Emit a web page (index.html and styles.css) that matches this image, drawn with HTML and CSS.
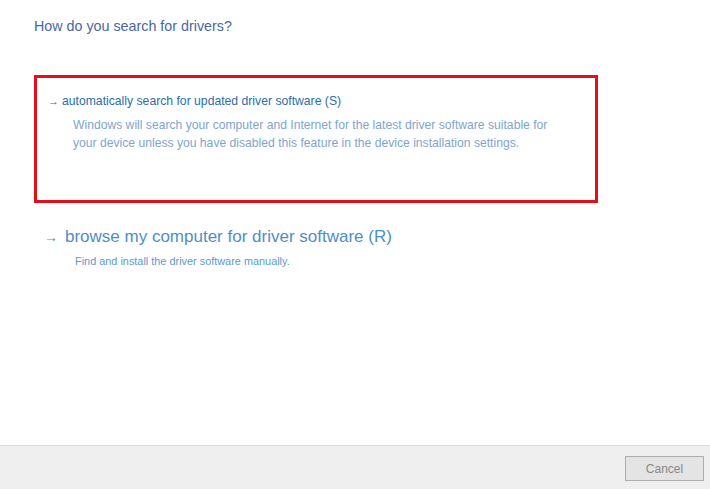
FILE: index.html
```html
<!DOCTYPE html>
<html>
<head>
<meta charset="utf-8">
<link rel="stylesheet" href="styles.css">
</head>
<body>
<div class="page">
  <main class="content">
    <h1 class="title">How do you search for drivers?</h1>
    <div class="option option-auto">
      <div class="opt-head"><span class="arrow">→</span><span class="opt-label">automatically search for updated driver software (S)</span></div>
      <p class="opt-desc">Windows will search your computer and Internet for the latest driver software suitable for your device unless you have disabled this feature in the device installation settings.</p>
    </div>
    <div class="option option-browse">
      <div class="opt-head"><span class="arrow">→</span><span class="opt-label">browse my computer for driver software (R)</span></div>
      <p class="opt-desc">Find and install the driver software manually.</p>
    </div>
  </main>
  <footer class="footer">
    <button class="btn">Cancel</button>
  </footer>
</div>
</body>
</html>
```
FILE: styles.css
```css
html, body { margin: 0; padding: 0; }
body {
  width: 710px; height: 489px; overflow: hidden;
  font-family: "Liberation Sans", Arial, sans-serif;
  background: #fff;
}
.page { display: flex; flex-direction: column; height: 489px; }
.content { flex: 1; padding: 17px 0 0 34px; }
.title {
  margin: 0; font-weight: normal; font-size: 14.3px; line-height: 18px;
  color: #4a67a0;
}
.option-auto {
  margin-top: 40px;
  width: 558px; height: 122px;
  border: 3px solid #e3101c;
  padding: 0; box-sizing: content-box;
}
.option-auto .opt-head { margin: 15px 0 0 11px; display: flex; align-items: baseline; font-size: 12.2px; line-height: 16px; color: #2a6db0; }
.option-auto .arrow { font-size: 11px; margin-right: 3px; }
.option-auto .opt-desc { margin: 8px 40px 0 36px; font-size: 12.15px; line-height: 17.5px; color: #7ea5cf; }
.option-browse { margin-top: 23px; }
.option-browse .opt-head { display: flex; align-items: baseline; margin-left: 10px; font-size: 17px; line-height: 22px; color: #4f8dcb; }
.option-browse .arrow { font-size: 14px; margin-right: 7px; }
.option-browse .opt-desc { margin: 6px 0 0 41px; font-size: 10.9px; line-height: 14px; color: #5f98d0; }
.footer {
  background: #efefef; border-top: 1px solid #dcdcdc;
  display: flex; justify-content: flex-end; align-items: flex-start;
  padding: 10px 6px 0 0; box-sizing: border-box; height: 44px;
}
.btn {
  width: 79px; height: 25px; padding: 0;
  background: #e4e4e4; border: 1px solid #adadad;
  font-family: "Liberation Sans", Arial, sans-serif; font-size: 12px; color: #888;
}
```
